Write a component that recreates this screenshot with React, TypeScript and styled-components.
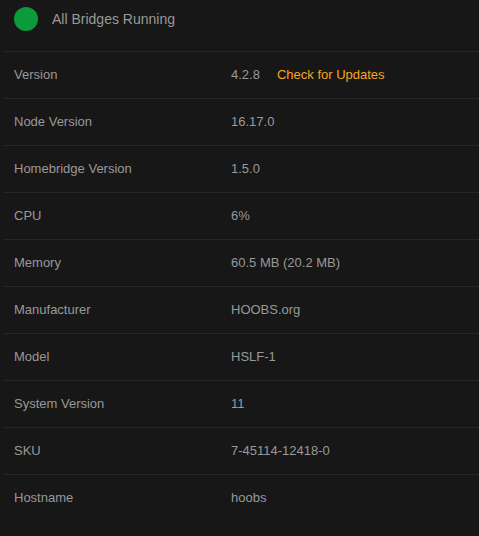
import styled, { createGlobalStyle } from 'styled-components';

const Global = createGlobalStyle`
    html, body {
        margin: 0;
        padding: 0;
        background: #171717;
    }
    body {
        font-family: "Liberation Sans", Arial, sans-serif;
    }
`;

/* ── Styles ── */

const Page = styled.div`
    width: 479px;
    min-height: 536px;
    background: #171717;
    box-sizing: border-box;
`;

const Header = styled.div`
    display: flex;
    align-items: center;
    gap: 14px;
    height: 38px;
    padding: 0 14px;
    margin-bottom: 13px;
`;

const StatusDot = styled.span<{ $color: string }>`
    width: 24px;
    height: 24px;
    border-radius: 50%;
    background: ${p => p.$color};
    flex-shrink: 0;
`;

const Title = styled.span`
    font-size: 14px;
    color: #999999;
`;

const Table = styled.div`
    margin-left: 4px;
`;

const Row = styled.div`
    display: grid;
    grid-template-columns: 227px 1fr;
    align-items: center;
    height: 47px;
    padding-bottom: 2px;
    border-top: 1px solid #262626;
    box-sizing: border-box;
    font-size: 13px;
    color: #999999;
`;

const Label = styled.span`
    padding-left: 10px;
`;

const Value = styled.span`
    display: flex;
    align-items: center;
    gap: 17px;
`;

const Link = styled.a`
    color: #f5a623;
    text-decoration: none;
    cursor: pointer;
`;

/* ── Data ── */

const rows: { label: string; value: string; update?: boolean }[] = [
    { label: 'Version', value: '4.2.8', update: true },
    { label: 'Node Version', value: '16.17.0' },
    { label: 'Homebridge Version', value: '1.5.0' },
    { label: 'CPU', value: '6%' },
    { label: 'Memory', value: '60.5 MB (20.2 MB)' },
    { label: 'Manufacturer', value: 'HOOBS.org' },
    { label: 'Model', value: 'HSLF-1' },
    { label: 'System Version', value: '11' },
    { label: 'SKU', value: '7-45114-12418-0' },
    { label: 'Hostname', value: 'hoobs' },
];

export default function App() {
    return (
        <Page>
            <Global />
            <Header>
                <StatusDot $color="#0c9a3c" />
                <Title>All Bridges Running</Title>
            </Header>
            <Table>
                {rows.map(r => (
                    <Row key={r.label}>
                        <Label>{r.label}</Label>
                        <Value>
                            {r.value}
                            {r.update && <Link>Check for Updates</Link>}
                        </Value>
                    </Row>
                ))}
            </Table>
        </Page>
    );
}
